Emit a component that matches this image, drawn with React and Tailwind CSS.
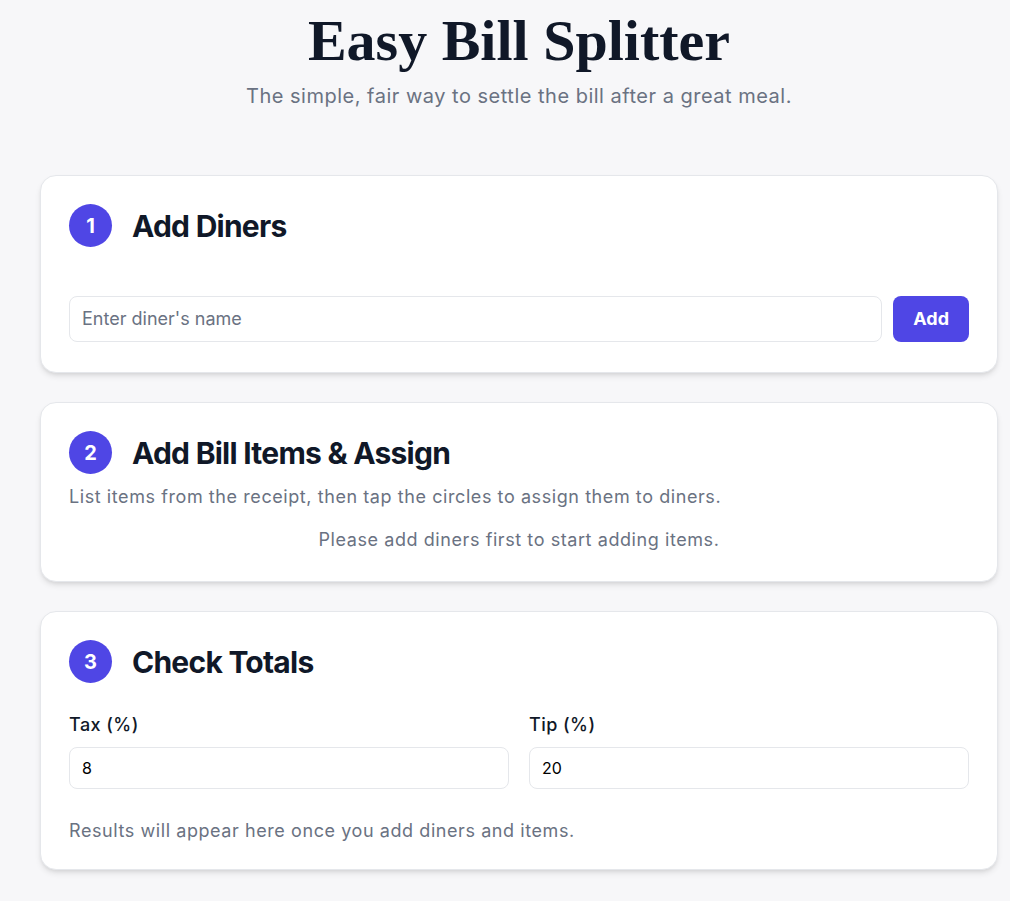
export default function App() {
  return (
    <div className="min-h-screen bg-[#f7f7f9] font-['Inter',sans-serif] pl-10 pr-3 pt-3 pb-8">
      <header className="text-center">
        <h1 className="font-['Liberation_Serif',serif] font-bold text-[58px] leading-none text-gray-900">
          Easy Bill Splitter
        </h1>
        <p className="mt-3 text-xl tracking-wide text-gray-500">
          The simple, fair way to settle the bill after a great meal.
        </p>
      </header>

      <main className="mt-[65px] space-y-[29px]">
        {/* step 1 */}
        <section className="bg-white rounded-2xl border border-gray-200 shadow-md px-7 pt-7 pb-[30px]">
          <StepHeader n="1" title="Add Diners" />
          <div className="mt-[49px] flex gap-[11px]">
            <input
              type="text"
              placeholder="Enter diner's name"
              className="flex-1 min-w-0 border border-gray-200 rounded-lg px-3 py-2 text-lg leading-7 placeholder:text-gray-500 outline-none"
            />
            <button className="bg-[#4f46e5] text-white font-bold text-lg leading-7 px-5 py-2 rounded-lg">
              Add
            </button>
          </div>
        </section>

        {/* step 2 */}
        <section className="bg-white rounded-2xl border border-gray-200 shadow-md px-7 pt-7 pb-[27px]">
          <StepHeader n="2" title="Add Bill Items & Assign" />
          <p className="mt-[9px] text-lg tracking-[0.032em] text-gray-500">
            List items from the receipt, then tap the circles to assign them to diners.
          </p>
          <p className="mt-[15px] text-lg tracking-[0.032em] text-gray-500 text-center">
            Please add diners first to start adding items.
          </p>
        </section>

        {/* step 3 */}
        <section className="bg-white rounded-2xl border border-gray-200 shadow-md px-7 pt-7 pb-6">
          <StepHeader n="3" title="Check Totals" />
          <div className="mt-7 grid grid-cols-2 gap-5">
            <div>
              <label className="block text-lg font-medium tracking-wide text-gray-900 mb-2">Tax (%)</label>
              <input
                type="number"
                defaultValue="8"
                className="w-full border border-gray-200 rounded-lg px-3 py-2 text-base leading-6 text-black outline-none"
              />
            </div>
            <div>
              <label className="block text-lg font-medium tracking-wide text-gray-900 mb-2">Tip (%)</label>
              <input
                type="number"
                defaultValue="20"
                className="w-full border border-gray-200 rounded-lg px-3 py-2 text-base leading-6 text-black outline-none"
              />
            </div>
          </div>
          <p className="mt-7 text-lg tracking-[0.032em] text-gray-500">
            Results will appear here once you add diners and items.
          </p>
        </section>
      </main>
    </div>
  );
}

function StepHeader({ n, title }) {
  return (
    <div className="flex items-center gap-5">
      <div className="w-[43px] h-[43px] rounded-full bg-[#4f46e5] text-white text-xl font-bold flex items-center justify-center shrink-0">
        {n}
      </div>
      <h2 className="text-3xl font-bold tracking-tight text-gray-900">{title}</h2>
    </div>
  );
}
